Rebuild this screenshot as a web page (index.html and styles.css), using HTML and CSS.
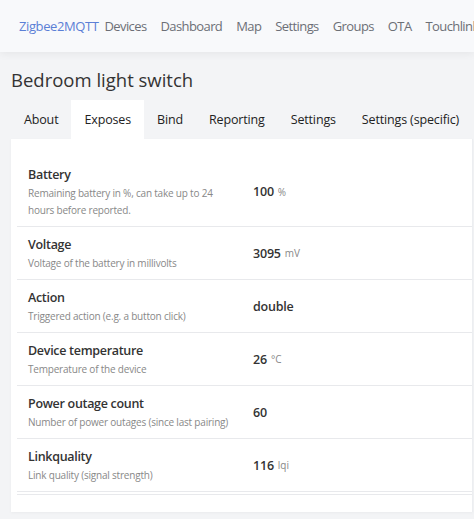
FILE: index.html
```html
<!DOCTYPE html>
<html>
<head>
<meta charset="utf-8">
<link rel="stylesheet" href="styles.css">
</head>
<body>
<nav class="navbar">
  <a class="brand">Zigbee2MQTT</a>
  <a class="nav-link">Devices</a>
  <a class="nav-link">Dashboard</a>
  <a class="nav-link">Map</a>
  <a class="nav-link">Settings</a>
  <a class="nav-link">Groups</a>
  <a class="nav-link">OTA</a>
  <a class="nav-link">Touchlink</a>
</nav>
<main class="page">
  <h1 class="title">Bedroom light switch</h1>
  <ul class="tabs">
    <li class="tab">About</li>
    <li class="tab active">Exposes</li>
    <li class="tab">Bind</li>
    <li class="tab">Reporting</li>
    <li class="tab">Settings</li>
    <li class="tab">Settings (specific)</li>
  </ul>
  <section class="card">
    <div class="table">
      <div class="row">
        <div class="label-cell">
          <div class="name">Battery</div>
          <div class="desc">Remaining battery in %, can take up to 24 hours before reported.</div>
        </div>
        <div class="value-cell"><span class="value">100</span> <span class="unit">%</span></div>
      </div>
      <div class="row">
        <div class="label-cell">
          <div class="name">Voltage</div>
          <div class="desc">Voltage of the battery in millivolts</div>
        </div>
        <div class="value-cell"><span class="value">3095</span> <span class="unit">mV</span></div>
      </div>
      <div class="row">
        <div class="label-cell">
          <div class="name">Action</div>
          <div class="desc">Triggered action (e.g. a button click)</div>
        </div>
        <div class="value-cell"><span class="value">double</span></div>
      </div>
      <div class="row">
        <div class="label-cell">
          <div class="name">Device temperature</div>
          <div class="desc">Temperature of the device</div>
        </div>
        <div class="value-cell"><span class="value">26</span> <span class="unit">°C</span></div>
      </div>
      <div class="row">
        <div class="label-cell">
          <div class="name">Power outage count</div>
          <div class="desc">Number of power outages (since last pairing)</div>
        </div>
        <div class="value-cell"><span class="value">60</span></div>
      </div>
      <div class="row">
        <div class="label-cell">
          <div class="name">Linkquality</div>
          <div class="desc">Link quality (signal strength)</div>
        </div>
        <div class="value-cell"><span class="value">116</span> <span class="unit">lqi</span></div>
      </div>
    </div>
  </section>
</main>
</body>
</html>
```
FILE: styles.css
```css
* { box-sizing: border-box; }
html, body {
  margin: 0;
  padding: 0;
  overflow: hidden;
}
body {
  font-family: "Open Sans", "Noto Sans", sans-serif;
  background: #f3f4f6;
  color: #333;
  width: 474px;
  height: 519px;
}
.navbar {
  display: flex;
  align-items: center;
  height: 52px;
  padding-left: 19px;
  background: #f8f9fb;
  box-shadow: 0 2px 8px rgba(0, 0, 0, 0.06);
  white-space: nowrap;
  position: relative;
  overflow: hidden;
}
.brand {
  color: #5b7fd6;
  font-size: 13px;
  letter-spacing: -0.4px;
  margin-right: -1px;
}
.nav-link {
  color: #6c6f76;
  font-size: 13px;
  letter-spacing: -0.6px;
  padding: 0 7px;
}
.page {
  padding: 14px 1px 0 11px;
}
.title {
  margin: 0;
  font-size: 18.5px;
  font-weight: 500;
  line-height: 28px;
  color: #333;
}
.tabs {
  list-style: none;
  margin: 6px 0 0 0;
  padding: 0;
  display: flex;
  white-space: nowrap;
  overflow: hidden;
}
.tab {
  font-size: 12.5px;
  letter-spacing: -0.15px;
  color: #222;
  padding: 0 13px;
  height: 39px;
  line-height: 39px;
}
.tab.active {
  background: #fff;
}
.card {
  background: #fff;
  padding: 18px 0 17px 6px;
  border-right: 1px solid #eceef1;
  box-shadow: 0 1px 3px rgba(0, 0, 0, 0.04);
}
.row {
  display: flex;
  border-bottom: 1px solid #e8e9ec;
}
.row:last-child {
  border-bottom: 4px double #e8e9ec;
}
.label-cell {
  width: 225px;
  padding: 7px 4px 7px 11px;
}
.name {
  font-size: 12.5px;
  font-weight: 600;
  letter-spacing: -0.3px;
  line-height: 21px;
  color: #333;
}
.desc {
  font-size: 10px;
  letter-spacing: -0.2px;
  line-height: 17px;
  color: #888;
}
.value-cell {
  display: flex;
  align-items: center;
  padding: 0 11px;
  gap: 4px;
}
.value {
  font-size: 12.5px;
  font-weight: 600;
  letter-spacing: -0.2px;
  color: #333;
}
.unit {
  font-size: 10px;
  color: #888;
}
```
